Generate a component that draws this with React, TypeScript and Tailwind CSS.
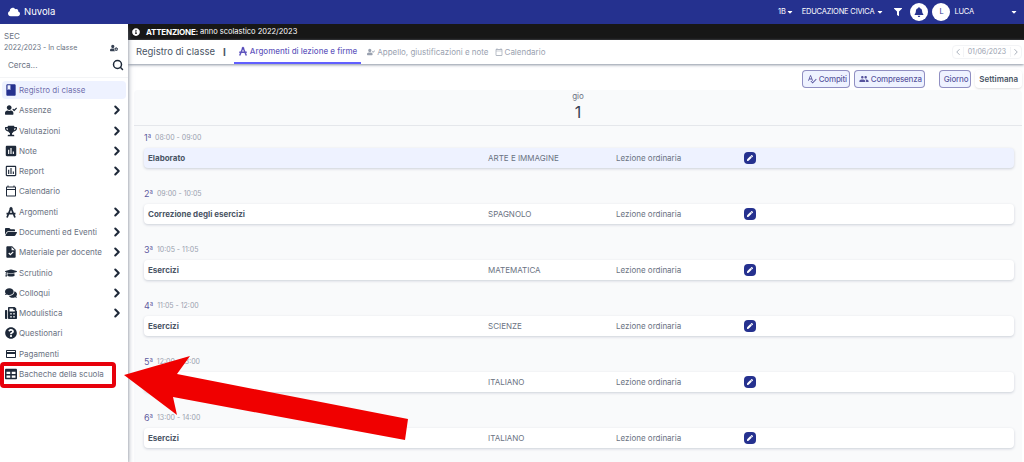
import type { ReactNode } from 'react';
import { ChevronLeft, ChevronRight, Search } from 'lucide-react';
import {
    FaComments,
    FaFax,
    FaFolderOpen,
    FaGraduationCap,
    FaQuestionCircle,
    FaTable,
    FaTrophy,
    FaUserCheck,
    FaUserCog,
    FaCloud,
    FaFilter,
    FaBell,
    FaCaretDown,
    FaInfoCircle,
    FaPen,
} from 'react-icons/fa';
import {
    MdBook,
    MdCreditCard,
    MdInsertChart,
    MdOutlineAssessment,
    MdOutlineCalendarToday,
    MdPeople,
    MdSpellcheck,
    MdTask,
} from 'react-icons/md';

const font = { fontFamily: 'Inter, "Noto Sans", sans-serif' };

// compass icon, the packages only have a thin one
function Compass({ className }: { className: string }) {
    return (
        <svg className={className} viewBox="0 0 24 24" fill="none" stroke="currentColor" strokeWidth={3.5}>
            <circle cx="12" cy="5" r="2.5" fill="currentColor" strokeWidth={1} />
            <path d="M11 6 4 23M13 6l7 17M3 15h18" />
        </svg>
    );
}

const menu: { label: string; icon: ReactNode; arrow?: boolean; active?: boolean }[] = [
    { label: 'Registro di classe', icon: <MdBook className="size-3.5 text-[#25318f]" />, active: true },
    { label: 'Assenze', icon: <FaUserCheck className="size-3" />, arrow: true },
    { label: 'Valutazioni', icon: <FaTrophy className="size-3" />, arrow: true },
    { label: 'Note', icon: <MdInsertChart className="size-3.5" />, arrow: true },
    { label: 'Report', icon: <MdOutlineAssessment className="size-3.5" />, arrow: true },
    { label: 'Calendario', icon: <MdOutlineCalendarToday className="size-3" /> },
    { label: 'Argomenti', icon: <Compass className="size-3" />, arrow: true },
    { label: 'Documenti ed Eventi', icon: <FaFolderOpen className="size-3" />, arrow: true },
    { label: 'Materiale per docente', icon: <MdTask className="size-3.5" />, arrow: true },
    { label: 'Scrutinio', icon: <FaGraduationCap className="size-3" />, arrow: true },
    { label: 'Colloqui', icon: <FaComments className="size-3" />, arrow: true },
    { label: 'Modulistica', icon: <FaFax className="size-3" />, arrow: true },
    { label: 'Questionari', icon: <FaQuestionCircle className="size-3" /> },
    { label: 'Pagamenti', icon: <MdCreditCard className="size-3" /> },
    { label: 'Bacheche della scuola', icon: <FaTable className="size-3" /> },
];

const slots = [
    { n: '1', time: '08:00 - 09:00', title: 'Elaborato', subject: 'ARTE E IMMAGINE', active: true },
    { n: '2', time: '09:00 - 10:05', title: 'Correzione degli esercizi', subject: 'SPAGNOLO' },
    { n: '3', time: '10:05 - 11:05', title: 'Esercizi', subject: 'MATEMATICA' },
    { n: '4', time: '11:05 - 12:00', title: 'Esercizi', subject: 'SCIENZE' },
    { n: '5', time: '12:00 - 13:00', title: '', subject: 'ITALIANO' },
    { n: '6', time: '13:00 - 14:00', title: 'Esercizi', subject: 'ITALIANO' },
];

function Sidebar() {
    return (
        <aside className="relative z-10 flex w-32 shrink-0 flex-col bg-white shadow-md shadow-gray-500">
            <div className="h-8 px-1 pt-1.5 text-[8px] leading-3 text-gray-500">
                <div>SEC</div>
                <div className="flex items-center justify-between pr-1.5 text-[7px]">
                    <span>2022/2023 - In classe</span>
                    <FaUserCog className="size-2 text-gray-700" />
                </div>
            </div>
            <div className="flex h-5.5 items-center justify-between border-b border-gray-100 pl-2 pr-1 pb-1 text-[8px] text-gray-500">
                Cerca...
                <Search className="size-3 text-gray-800" strokeWidth={3} />
            </div>
            <nav className="mt-0.5 flex h-76 flex-col">
                {menu.map((item) => (
                    <div key={item.label} className="flex flex-1 items-center px-0.5 py-px">
                        <div
                            className={`flex h-full w-full items-center rounded-sm pl-0.5 pr-0.5 text-[8px] ${
                                item.active ? 'bg-indigo-50 text-indigo-900/70' : 'text-gray-500'
                            }`}
                        >
                            <span className="flex w-3.5 justify-center text-gray-800">{item.icon}</span>
                            <span className="ml-px flex-1 whitespace-nowrap">{item.label}</span>
                            {item.arrow && <ChevronRight className="size-3.5 text-gray-800" strokeWidth={3.5} />}
                        </div>
                    </div>
                ))}
            </nav>
        </aside>
    );
}

function Slot({ slot }: { slot: (typeof slots)[number] }) {
    return (
        <div className="h-14">
            <div className="flex h-4 items-center pl-2.5 text-[7px] text-gray-400">
                <span className="mr-1 text-[9px] text-indigo-900/80">
                    {slot.n}
                    <sup className="text-[6px]">a</sup>
                </span>
                {slot.time}
            </div>
            <div
                className={`mt-0.5 ml-2.5 mr-2 flex h-5 items-center rounded-sm pl-1 text-[8px] text-gray-500 shadow shadow-gray-300 ${
                    slot.active ? 'bg-indigo-50' : 'bg-white'
                }`}
            >
                <div className="w-85 font-bold text-gray-600">{slot.title}</div>
                <div className="w-32">{slot.subject}</div>
                <div className="w-32">Lezione ordinaria</div>
                <div className="flex size-3 items-center justify-center rounded-sm bg-[#25318f]">
                    <FaPen className="size-1.5 text-white" />
                </div>
            </div>
        </div>
    );
}

function ToolButton({ children }: { children: ReactNode }) {
    return (
        <div className="flex h-4.5 items-center gap-0.5 rounded-sm border border-indigo-900/50 bg-indigo-50 pl-1 pr-0.5 text-[8px] font-medium tracking-tight text-indigo-900/80">
            {children}
        </div>
    );
}

export default function App() {
    return (
        <div className="relative flex h-screen w-full flex-col overflow-hidden bg-white" style={font}>
            <header className="flex h-6 shrink-0 items-center bg-[#25318f] pl-2 pr-1.5 text-[7.5px] tracking-tight text-white">
                <FaCloud className="size-3" />
                <span className="ml-1 text-[9.5px] tracking-normal">Nuvola</span>
                <div className="ml-auto flex items-center">
                    <span>1B</span>
                    <FaCaretDown className="size-2" />
                    <span className="ml-2">EDUCAZIONE CIVICA</span>
                    <FaCaretDown className="ml-0.5 size-2" />
                    <FaFilter className="ml-2.5 size-2" />
                    <span className="ml-2 flex size-4.5 items-center justify-center rounded-full bg-white text-[#25318f]">
                        <FaBell className="size-2.5" />
                    </span>
                    <span className="ml-1 flex size-4.5 items-center justify-center rounded-full bg-white text-[#25318f]">L</span>
                    <span className="ml-1">LUCA</span>
                    <FaCaretDown className="ml-9 size-2" />
                </div>
            </header>

            <div className="flex min-h-0 flex-1">
                <Sidebar />
                <main className="flex min-w-0 flex-1 flex-col">
                    <div className="flex h-4 shrink-0 items-center bg-neutral-900 pl-1 text-[8px] text-white">
                        <FaInfoCircle className="size-2" />
                        <span className="ml-1.5 font-bold tracking-tight">ATTENZIONE:</span>
                        <span className="ml-0.5 text-[7.5px]">anno scolastico 2022/2023</span>
                    </div>
                    <div className="relative flex h-6 shrink-0 items-center pl-2 pr-0.5 text-[8px] text-gray-400 shadow shadow-gray-400">
                        <span className="text-[9.5px] text-gray-600">Registro di classe</span>
                        <span className="ml-2 text-[10px] font-bold text-gray-600">I</span>
                        <div className="ml-2 flex h-full items-center gap-0.5 border-b-2 border-indigo-500 px-1 font-medium text-indigo-800/80">
                            <Compass className="size-2.5" />
                            Argomenti di lezione e firme
                        </div>
                        <FaUserCheck className="ml-1.5 size-2" />
                        <span className="ml-0.5">Appello, giustificazioni e note</span>
                        <MdOutlineCalendarToday className="ml-1.5 size-2" />
                        <span className="ml-0.5">Calendario</span>
                        <div className="ml-auto flex h-3.5 items-center rounded-sm border border-gray-100 text-[7px]">
                            <ChevronLeft className="size-2.5" />
                            <span className="border-x border-gray-100 px-1">01/06/2023</span>
                            <ChevronRight className="size-2.5" />
                        </div>
                    </div>
                    <div className="flex h-6.5 shrink-0 items-center pt-1 pr-0.5">
                        <div className="ml-auto flex items-center gap-1">
                            <ToolButton>
                                <MdSpellcheck className="size-2.5" />
                                Compiti
                            </ToolButton>
                            <ToolButton>
                                <MdPeople className="size-2.5" />
                                Compresenza
                            </ToolButton>
                            <div className="ml-2.5">
                                <ToolButton>Giorno</ToolButton>
                            </div>
                            <div className="flex h-4.5 items-center rounded-sm bg-white px-1 text-[8px] font-semibold text-gray-600 shadow-sm">
                                Settimana
                            </div>
                        </div>
                    </div>
                    <div className="ml-1.5 mr-0.5 min-h-0 flex-1 rounded-t-sm bg-gray-50">
                        <div className="flex h-9 flex-col items-center border-b border-gray-200 text-gray-500">
                            <span className="text-[8px] leading-3">gio</span>
                            <span className="text-base leading-5 text-gray-700">1</span>
                        </div>
                        <div className="pt-1">
                            {slots.map((s) => (
                                <Slot key={s.n} slot={s} />
                            ))}
                        </div>
                    </div>
                </main>
            </div>

            <div className="absolute left-0 top-90.5 z-20 h-6.5 w-29 rounded-sm border-4 border-red-600" />
            <svg className="absolute inset-0 z-20 h-full w-full" viewBox="0 0 1024 462">
                <polygon fill="#f00000" points="124,375 190,356 177,374 408,419 405,440 173,397 177,415" />
            </svg>
        </div>
    );
}
